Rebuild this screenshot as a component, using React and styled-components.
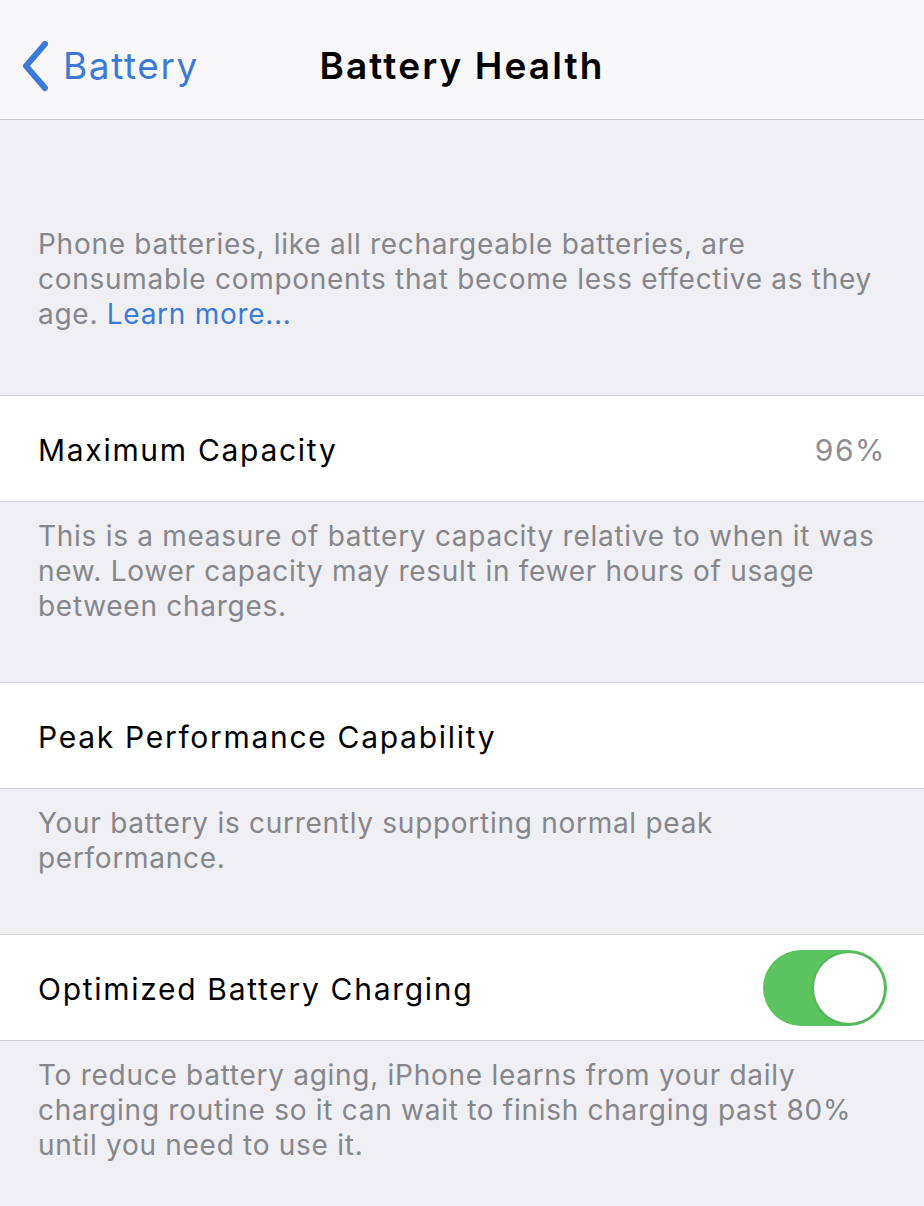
import React, { useState } from 'react';
import styled, { createGlobalStyle } from 'styled-components';

const GlobalStyle = createGlobalStyle`
  html, body {
    margin: 0;
    padding: 0;
    background: #efeff4;
  }
  body {
    font-family: Inter, "Noto Sans", sans-serif;
    -webkit-font-smoothing: antialiased;
  }
`;

const Screen = styled.div`
  width: 924px;
  min-height: 1206px;
  background: #efeff4;
  display: flex;
  flex-direction: column;
`;

const NavBar = styled.div`
  height: 120px;
  background: #f8f8fa;
  border-bottom: 1px solid #c9c9ce;
  box-sizing: border-box;
  position: relative;
  display: flex;
  align-items: center;
  padding-top: 12px;
`;

const BackButton = styled.div`
  display: flex;
  align-items: center;
  gap: 13px;
  padding-left: 20px;
  color: #3c7ad8;
  font-size: 37px;
  letter-spacing: 1.6px;
`;

const Title = styled.div`
  position: absolute;
  left: 0;
  right: 0;
  top: 0;
  bottom: 0;
  padding-top: 11px;
  display: flex;
  align-items: center;
  justify-content: center;
  font-size: 37px;
  font-weight: 600;
  color: #000;
  letter-spacing: 2.1px;
  pointer-events: none;
`;

const Footer = styled.div`
  padding: ${(p) => p.$top || 17}px 20px ${(p) => p.$bottom || 58}px 38px;
  color: #86868b;
  font-size: 28px;
  line-height: 35px;
  letter-spacing: 0.72px;
`;

const Link = styled.span`
  color: #3c7ad8;
`;

const Row = styled.div`
  height: 107px;
  background: #fff;
  border-top: 1px solid #d4d4d8;
  border-bottom: 1px solid #d4d4d8;
  box-sizing: border-box;
  display: flex;
  align-items: center;
  justify-content: space-between;
  padding: 3px 38px 0 38px;
`;

const Label = styled.div`
  font-size: 30px;
  color: #000;
  letter-spacing: 1.7px;
`;

const Value = styled.div`
  font-size: 30px;
  color: #8e8e93;
  letter-spacing: 1.5px;
`;

const Track = styled.div`
  width: 124px;
  height: 76px;
  border-radius: 38px;
  background: ${(p) => (p.$on ? '#5bc460' : '#e5e5ea')};
  position: relative;
  margin-right: -1px;
  margin-top: -3px;
  cursor: pointer;
`;

const Knob = styled.div`
  position: absolute;
  top: 3px;
  left: ${(p) => (p.$on ? '51px' : '3px')};
  width: 70px;
  height: 70px;
  border-radius: 50%;
  background: #fff;
  box-shadow: 0 0 0 2px #56b85b, 0 2px 4px rgba(0, 0, 0, 0.12);
`;

const Chevron = () => (
  <svg width="30" height="52" viewBox="0 0 30 52">
    <path d="M25 4 L6 26 L25 48" fill="none" stroke="#3c7ad8" strokeWidth="6" strokeLinecap="round" strokeLinejoin="round" />
  </svg>
);

export default function App() {
  const [on, setOn] = useState(true);
  return (
    <Screen>
      <GlobalStyle />
      <NavBar>
        <BackButton>
          <Chevron />
          <span>Battery</span>
        </BackButton>
        <Title>Battery Health</Title>
      </NavBar>

      <Footer $top={107} $bottom={63}>
        Phone batteries, like all rechargeable batteries, are<br />
        consumable components that become less effective as they<br />
        age. <Link>Learn more...</Link>
      </Footer>

      <Row>
        <Label>Maximum Capacity</Label>
        <Value>96%</Value>
      </Row>
      <Footer>
        This is a measure of battery capacity relative to when it was<br />
        new. Lower capacity may result in fewer hours of usage<br />
        between charges.
      </Footer>

      <Row>
        <Label>Peak Performance Capability</Label>
      </Row>
      <Footer>
        Your battery is currently supporting normal peak<br />
        performance.
      </Footer>

      <Row>
        <Label>Optimized Battery Charging</Label>
        <Track $on={on} onClick={() => setOn(!on)}>
          <Knob $on={on} />
        </Track>
      </Row>
      <Footer>
        To reduce battery aging, iPhone learns from your daily<br />
        charging routine so it can wait to finish charging past 80%<br />
        until you need to use it.
      </Footer>
    </Screen>
  );
}
